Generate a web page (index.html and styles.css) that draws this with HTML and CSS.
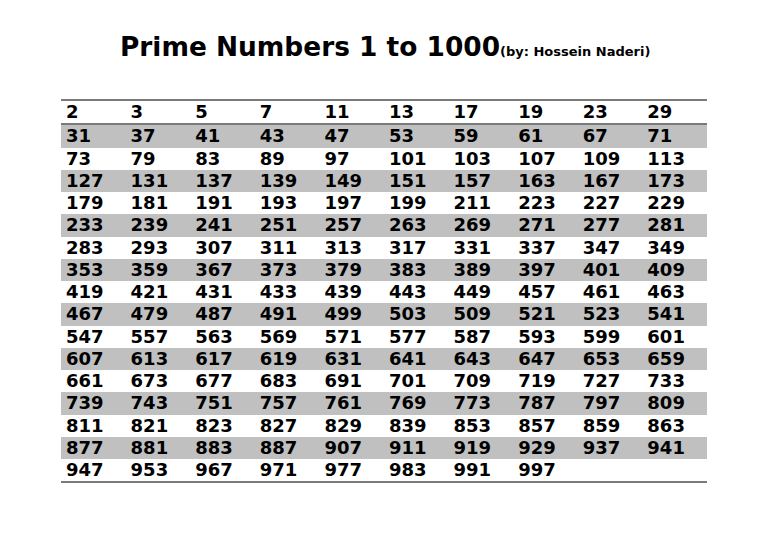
FILE: index.html
```html
<!DOCTYPE html>
<html>
<head>
<meta charset="utf-8">
<link rel="stylesheet" href="styles.css">
</head>
<body>
<div class="page">
  <h1 class="title">Prime Numbers 1 to 1000<span class="by">(by: Hossein Naderi)</span></h1>
  <table class="primes">
    <tbody>
      <tr class="head"><td>2</td><td>3</td><td>5</td><td>7</td><td>11</td><td>13</td><td>17</td><td>19</td><td>23</td><td>29</td></tr>
      <tr class="alt"><td>31</td><td>37</td><td>41</td><td>43</td><td>47</td><td>53</td><td>59</td><td>61</td><td>67</td><td>71</td></tr>
      <tr><td>73</td><td>79</td><td>83</td><td>89</td><td>97</td><td>101</td><td>103</td><td>107</td><td>109</td><td>113</td></tr>
      <tr class="alt"><td>127</td><td>131</td><td>137</td><td>139</td><td>149</td><td>151</td><td>157</td><td>163</td><td>167</td><td>173</td></tr>
      <tr><td>179</td><td>181</td><td>191</td><td>193</td><td>197</td><td>199</td><td>211</td><td>223</td><td>227</td><td>229</td></tr>
      <tr class="alt"><td>233</td><td>239</td><td>241</td><td>251</td><td>257</td><td>263</td><td>269</td><td>271</td><td>277</td><td>281</td></tr>
      <tr><td>283</td><td>293</td><td>307</td><td>311</td><td>313</td><td>317</td><td>331</td><td>337</td><td>347</td><td>349</td></tr>
      <tr class="alt"><td>353</td><td>359</td><td>367</td><td>373</td><td>379</td><td>383</td><td>389</td><td>397</td><td>401</td><td>409</td></tr>
      <tr><td>419</td><td>421</td><td>431</td><td>433</td><td>439</td><td>443</td><td>449</td><td>457</td><td>461</td><td>463</td></tr>
      <tr class="alt"><td>467</td><td>479</td><td>487</td><td>491</td><td>499</td><td>503</td><td>509</td><td>521</td><td>523</td><td>541</td></tr>
      <tr><td>547</td><td>557</td><td>563</td><td>569</td><td>571</td><td>577</td><td>587</td><td>593</td><td>599</td><td>601</td></tr>
      <tr class="alt"><td>607</td><td>613</td><td>617</td><td>619</td><td>631</td><td>641</td><td>643</td><td>647</td><td>653</td><td>659</td></tr>
      <tr><td>661</td><td>673</td><td>677</td><td>683</td><td>691</td><td>701</td><td>709</td><td>719</td><td>727</td><td>733</td></tr>
      <tr class="alt"><td>739</td><td>743</td><td>751</td><td>757</td><td>761</td><td>769</td><td>773</td><td>787</td><td>797</td><td>809</td></tr>
      <tr><td>811</td><td>821</td><td>823</td><td>827</td><td>829</td><td>839</td><td>853</td><td>857</td><td>859</td><td>863</td></tr>
      <tr class="alt"><td>877</td><td>881</td><td>883</td><td>887</td><td>907</td><td>911</td><td>919</td><td>929</td><td>937</td><td>941</td></tr>
      <tr class="last"><td>947</td><td>953</td><td>967</td><td>971</td><td>977</td><td>983</td><td>991</td><td>997</td><td></td><td></td></tr>
    </tbody>
  </table>
</div>
</body>
</html>
```
FILE: styles.css
```css
html, body {
  margin: 0;
  padding: 0;
  background: #ffffff;
}
body {
  font-family: "DejaVu Sans", sans-serif;
  color: #000;
}
.page {
  width: 768px;
  height: 543px;
  padding-top: 30px;
  box-sizing: border-box;
}
.title {
  margin: 0 0 0 120px;
  font-size: 26.4px;
  font-weight: bold;
  line-height: 34px;
  height: 69px;
  white-space: nowrap;
}
.by {
  font-size: 13px;
  font-weight: bold;
}
.primes {
  margin-left: 61px;
  width: 646px;
  border-collapse: collapse;
  table-layout: fixed;
  border-top: 2px solid #7a7a7a;
  border-bottom: 2px solid #7a7a7a;
}
.primes td {
  height: 22.25px;
  padding: 0 0 0 5px;
  font-size: 18px;
  font-weight: bold;
  line-height: 22px;
  vertical-align: middle;
}
.primes tr.head td {
  border-bottom: 2px solid #7a7a7a;
}
.primes tr.alt td {
  background: #c0c0c0;
}
```
